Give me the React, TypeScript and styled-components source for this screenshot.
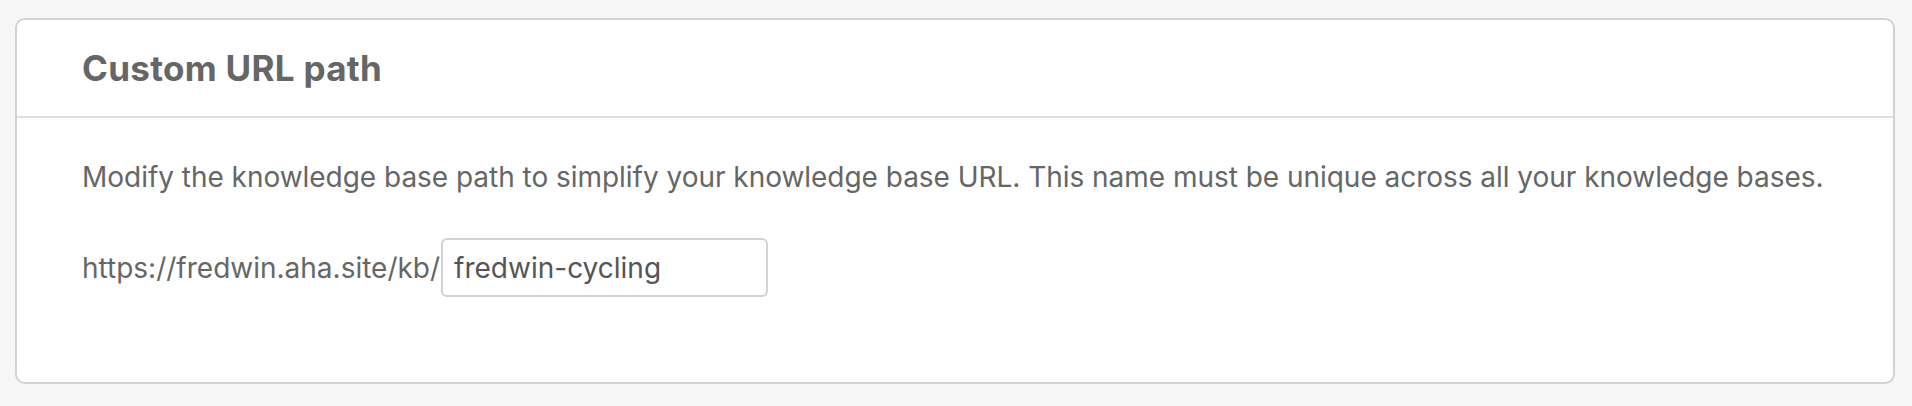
import styled, { createGlobalStyle } from "styled-components";

const GlobalStyle = createGlobalStyle`
  body {
    margin: 0;
    background: #f6f6f6;
    font-family: Inter, "Noto Sans", sans-serif;
  }
`;

const App = () => {
  return (
    <>
      <GlobalStyle />
      <StPage>
        <StCard>
          <StHeader>
            <StTitle>Custom URL path</StTitle>
          </StHeader>
          <StBody>
            <StText>
              Modify the knowledge base path to simplify your knowledge base
              URL. This name must be unique across all your knowledge bases.
            </StText>
            <StRow>
              <StPrefix>https://fredwin.aha.site/kb/</StPrefix>
              <StInput defaultValue="fredwin-cycling" />
            </StRow>
          </StBody>
        </StCard>
      </StPage>
    </>
  );
};

export default App;

const StPage = styled.div`
  padding: 18px 17px 22px 15px;
`;

const StCard = styled.div`
  background: #fff;
  border: 2px solid #d2d2d2;
  border-radius: 10px;
  height: 366px;
  box-sizing: border-box;
`;

const StHeader = styled.div`
  height: 96px;
  display: flex;
  align-items: center;
  padding-left: 65px;
  border-bottom: 2px solid #e0e0e0;
`;

const StTitle = styled.h2`
  margin: 0;
  font-size: 35px;
  font-weight: 700;
  color: #666;
  letter-spacing: 0.3px;
`;

const StBody = styled.div`
  padding: 40px 65px 0;
`;

const StText = styled.p`
  margin: 0;
  font-size: 28px;
  color: #666;
  line-height: 38px;
  letter-spacing: -0.03px;
`;

const StRow = styled.div`
  display: flex;
  align-items: center;
  margin-top: 42px;
`;

const StPrefix = styled.span`
  font-size: 28px;
  color: #666;
`;

const StInput = styled.input`
  width: 327px;
  height: 59px;
  box-sizing: border-box;
  margin-left: 1px;
  padding: 0 11px;
  border: 2px solid #d2d2d2;
  border-radius: 6px;
  font-family: Inter, "Noto Sans", sans-serif;
  font-size: 28px;
  color: #555;
  outline: none;
`;
